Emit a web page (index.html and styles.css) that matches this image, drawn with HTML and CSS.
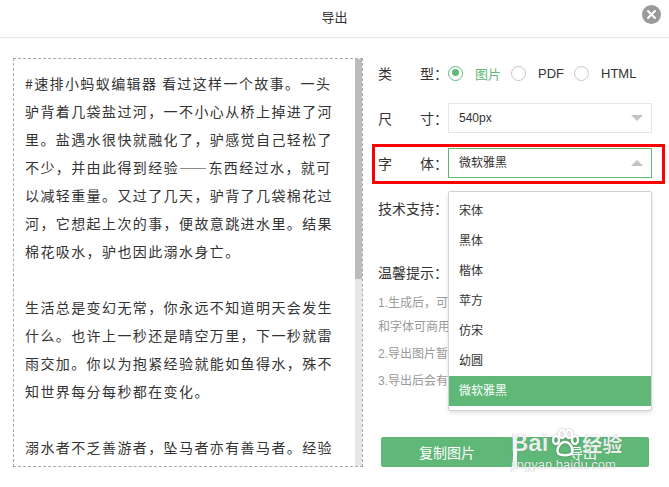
FILE: index.html
```html
<!DOCTYPE html>
<html lang="zh-CN">

<head>
  <meta charset="UTF-8">
  <meta name="viewport" content="width=device-width, initial-scale=1.0">
  <title>导出</title>
  <link rel="stylesheet" href="styles.css">
</head>

<body>
  <div class="dialog">
    <div class="dialog-head">
      <span class="dialog-title">导出</span>
      <a class="dialog-close" href="javascript:;">
        <svg width="19" height="19" viewBox="0 0 19 19">
          <path d="M6 6L13 13M13 6L6 13" stroke="#fff" stroke-width="2" stroke-linecap="round" />
        </svg>
      </a>
    </div>

    <div class="dialog-body">
      <div class="preview">
        <div class="preview-text">
          <p>#速排小蚂蚁编辑器 看过这样一个故事。一头驴背着几袋盐过河，一不小心从桥上掉进了河里。盐遇水很快就融化了，驴感觉自己轻松了不少，并由此得到经验——东西经过水，就可以减轻重量。又过了几天，驴背了几袋棉花过河，它想起上次的事，便故意跳进水里。结果棉花吸水，驴也因此溺水身亡。</p>
          <p>生活总是变幻无常，你永远不知道明天会发生什么。也许上一秒还是晴空万里，下一秒就雷雨交加。你以为抱紧经验就能如鱼得水，殊不知世界每分每秒都在变化。</p>
          <p>溺水者不乏善游者，坠马者亦有善马者。经验固然可贵，但过分依赖经验，只会让人故步自封。</p>
        </div>
        <div class="scrollbar">
          <div class="scrollbar-thumb"></div>
        </div>
      </div>

      <div class="export-form">
        <div class="form-item">
          <label class="form-label">类　　型：</label>
          <div class="radio-group">
            <span class="radio is-checked"><i></i>图片</span>
            <span class="radio"><i></i>PDF</span>
            <span class="radio"><i></i>HTML</span>
          </div>
        </div>

        <div class="form-item">
          <label class="form-label">尺　　寸：</label>
          <div class="select">
            <div class="select-title">540px</div>
          </div>
        </div>

        <div class="form-item is-marked">
          <label class="form-label">字　　体：</label>
          <div class="select is-open">
            <div class="select-title">微软雅黑</div>
            <dl class="select-list">
              <dd>宋体</dd>
              <dd>黑体</dd>
              <dd>楷体</dd>
              <dd>苹方</dd>
              <dd>仿宋</dd>
              <dd>幼圆</dd>
              <dd class="is-this">微软雅黑</dd>
            </dl>
          </div>
          <span class="mark"></span>
        </div>

        <div class="form-item">
          <label class="form-label">技术支持：</label>
        </div>

        <div class="tips">
          <div class="tips-title">温馨提示：</div>
          <p>1.生成后，可直接复制或下载图片，图片中用的素材和字体可商用。</p>
          <p>2.导出图片暂不支持动图和视频。</p>
          <p>3.导出后会有水印，开通会员可去除。</p>
        </div>

        <div class="form-btns">
          <button class="btn">复制图片</button>
          <button class="btn">导出</button>
        </div>
      </div>
    </div>

    <div class="watermark">
      <div class="watermark-logo">
        <span>Bai</span>
        <svg width="30" height="28" viewBox="0 0 30 28">
          <g fill="none" stroke="#fff" stroke-width="2.4">
            <ellipse cx="6" cy="11" rx="3" ry="4" />
            <ellipse cx="12" cy="5" rx="3" ry="4" />
            <ellipse cx="19" cy="5" rx="3" ry="4" />
            <ellipse cx="25" cy="11" rx="3" ry="4" />
            <path d="M15 13C10 13 6 20 8 24C10 27 20 27 22 24C24 20 20 13 15 13Z" />
          </g>
        </svg>
        <span class="cn">经验</span>
      </div>
      <div class="watermark-url">jingyan.baidu.com</div>
    </div>
  </div>
</body>

</html>
```

FILE: styles.css
```css
:root {
  --green: #5FB878;
}

* {
  padding: 0;
  margin: 0;
}

body {
  font-family: "Liberation Sans", "Noto Sans CJK SC", sans-serif;
  color: #333;
  background: #fff;
}

.dialog {
  position: relative;
  width: 669px;
  height: 487px;
  overflow: hidden;
}

.dialog-head {
  position: relative;
  height: 37px;
  border-bottom: 1px solid #e8e8e8;
  text-align: center;
  line-height: 36px;
  font-size: 13px;
}

.dialog-close {
  position: absolute;
  top: 5px;
  right: 8px;
  width: 19px;
  height: 19px;
  border-radius: 50%;
  background-color: #9a9a9a;
}

.dialog-close svg {
  display: block;
}

.dialog-body {
  display: flex;
  gap: 15px;
  padding: 20px 17px 20px 13px;
}

/* 左侧预览 */
.preview {
  box-sizing: border-box;
  display: flex;
  width: 350px;
  height: 409px;
  flex: none;
  border: 1px dashed #aaa;
}

.preview-text {
  flex: 1;
  padding: 10px 10px 0 11px;
  overflow: hidden;
  font-family: "Noto Sans CJK SC", sans-serif;
  font-size: 14px;
  line-height: 28px;
  letter-spacing: 1.4px;
  color: #333;
}

.preview-text p+p {
  margin-top: 28px;
}

.scrollbar {
  width: 7px;
  flex: none;
  background-color: #e6e6e6;
}

.scrollbar-thumb {
  height: 220px;
  background-color: #bcbcbc;
}

/* 右侧表单 */
.export-form {
  width: 274px;
  display: flex;
  flex-direction: column;
}

.form-item {
  position: relative;
  display: flex;
  align-items: center;
  height: 30px;
  margin-bottom: 15px;
}

.form-label {
  width: 70px;
  flex: none;
  font-size: 14px;
  white-space: nowrap;
}

.radio-group {
  display: flex;
  align-items: center;
}

.radio {
  display: inline-flex;
  align-items: center;
  margin-right: 10px;
  font-size: 13px;
}

.radio i {
  position: relative;
  box-sizing: border-box;
  width: 15px;
  height: 15px;
  margin-right: 12px;
  border: 1.5px solid #c6c6c6;
  border-radius: 50%;
}

.radio.is-checked {
  color: var(--green);
}

.radio.is-checked i {
  border-color: var(--green);
}

.radio.is-checked i::after {
  content: "";
  position: absolute;
  top: 2.5px;
  left: 2.5px;
  width: 7px;
  height: 7px;
  border-radius: 50%;
  background-color: var(--green);
}

.select {
  position: relative;
  flex: 1;
}

.select-title {
  box-sizing: border-box;
  height: 30px;
  padding-left: 10px;
  line-height: 28px;
  border: 1px solid #e6e6e6;
  font-size: 12px;
  color: #333;
}

.select-title::after {
  content: "";
  position: absolute;
  top: 12px;
  right: 9px;
  border: 6px solid transparent;
  border-top-color: #c2c2c2;
}

.select.is-open .select-title {
  border-color: var(--green);
}

.select.is-open .select-title::after {
  top: 6px;
  border-top-color: transparent;
  border-bottom-color: #c2c2c2;
}

.select-list {
  position: absolute;
  top: 43px;
  left: 0;
  right: 0;
  z-index: 10;
  padding: 4px 0;
  background-color: #fff;
  border: 1px solid #d2d2d2;
  border-radius: 2px;
  box-shadow: 0 2px 4px rgba(0, 0, 0, .12);
}

.select-list dd {
  height: 30px;
  line-height: 30px;
  padding-left: 10px;
  font-size: 12px;
  color: #333;
}

.select-list dd.is-this {
  background-color: var(--green);
  color: #fff;
}

.is-marked .mark {
  position: absolute;
  top: -4px;
  bottom: -6px;
  left: -6px;
  right: -13px;
  border: 3px solid #f00;
  pointer-events: none;
}

.tips {
  margin-top: 20px;
}

.tips-title {
  font-size: 14px;
  line-height: 30px;
}

.tips p {
  margin-top: 3px;
  font-size: 12px;
  line-height: 24px;
  color: #999;
}

.form-btns {
  display: flex;
  gap: 4px;
  margin-top: auto;
  margin-left: 3px;
}

.btn {
  width: 132px;
  height: 30px;
  border: none;
  border-radius: 2px;
  background-color: var(--green);
  color: #fff;
  font-family: "Noto Sans CJK SC", sans-serif;
  font-size: 14px;
}

/* 百度经验水印 */
.watermark {
  position: absolute;
  left: 511px;
  top: 428px;
  color: rgba(255, 255, 255, .9);
  text-shadow: 0 0 1px rgba(0, 0, 0, .35);
  pointer-events: none;
}

.watermark-logo {
  display: flex;
  align-items: center;
  height: 30px;
  font-size: 24px;
  font-weight: bold;
}

.watermark-logo svg {
  margin: 0 2px;
  filter: drop-shadow(0 0 1px rgba(0, 0, 0, .3));
}

.watermark-logo .cn {
  font-family: "Noto Sans CJK SC", sans-serif;
  font-size: 20px;
}

.watermark-url {
  font-size: 13px;
  line-height: 14px;
}
```
